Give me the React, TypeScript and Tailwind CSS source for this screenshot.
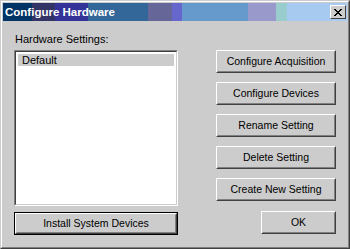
import type { ReactNode } from 'react';

const sideButtons = [
  'Configure Acquisition',
  'Configure Devices',
  'Rename Setting',
  'Delete Setting',
  'Create New Setting',
];

function Button({ children, isDefault, className = '' }: { children: ReactNode; isDefault?: boolean; className?: string }) {
  const face = (
    <div className="h-full border border-t-white border-l-white border-r-[#404040] border-b-[#404040]">
      <div className="h-full flex items-center justify-center border border-t-[#cccccc] border-l-[#cccccc] border-r-[#808080] border-b-[#808080] text-[10.5px]">
        {children}
      </div>
    </div>
  );
  if (isDefault) {
    return <div className={`h-[23px] border border-black ${className}`}>{face}</div>;
  }
  return <div className={`h-[23px] ${className}`}>{face}</div>;
}

export default function App() {
  return (
    <div
      className="w-[350px] h-[249px] bg-[#cccccc] text-black text-[11px] leading-[13px] border border-t-[#cccccc] border-l-[#cccccc] border-r-[#404040] border-b-[#404040]"
      style={{ fontFamily: '"Liberation Sans", Arial, sans-serif' }}
    >
      <div className="h-full border border-t-white border-l-white border-r-[#808080] border-b-[#808080] p-px flex flex-col">
        <div className="h-[18px] flex items-center justify-between pl-[2px] pr-px bg-[linear-gradient(to_right,#003366_0px,#003366_29px,#333366_29px,#333366_52px,#333399_52px,#333399_85px,#336699_85px,#336699_145px,#666699_145px,#666699_169px,#6666cc_169px,#6666cc_179px,#6699cc_179px,#6699cc_245px,#9999cc_245px,#9999cc_273px,#99cccc_273px,#99cccc_284px,#a6caf0_284px)]">
          <span className="text-white font-bold text-[11.5px] leading-[14px]">Configure Hardware</span>
          <div className="w-[16px] h-[14px] bg-[#cccccc] border border-t-white border-l-white border-r-[#404040] border-b-[#404040] flex items-center justify-center">
            <svg width="8" height="7" viewBox="0 0 8 7" shapeRendering="crispEdges">
              <path d="M0 0h2v1h-2zM6 0h2v1h-2zM1 1h2v1h-2zM5 1h2v1h-2zM2 2h4v1h-4zM3 3h2v1h-2zM2 4h4v1h-4zM1 5h2v1h-2zM5 5h2v1h-2zM0 6h2v1h-2zM6 6h2v1h-2z" fill="#000" />
            </svg>
          </div>
        </div>

        <div className="flex-1 flex pl-[11px] pt-[12px]">
          <div className="w-[164px] flex flex-col">
            <div className="pl-px h-[17px]">Hardware Settings:</div>
            <div className="h-[156px] border border-t-[#808080] border-l-[#808080] border-r-white border-b-white">
              <div className="h-full bg-white border border-t-[#404040] border-l-[#404040] border-r-[#cccccc] border-b-[#cccccc] pt-[2px] px-[2px]">
                <div className="h-[12px] bg-[#cccccc] pl-[4px] leading-[12px]">Default</div>
              </div>
            </div>
            <Button isDefault className="mt-[6px]">Install System Devices</Button>
          </div>

          <div className="ml-[38px] w-[120px] flex flex-col pt-[17px]">
            {sideButtons.map((label, i) => (
              <Button key={label} className={i === 0 ? '' : 'mt-[9px]'}>
                {label}
              </Button>
            ))}
            <div className="mt-[10px] flex justify-end">
              <Button className="w-[75px]">OK</Button>
            </div>
          </div>
        </div>
      </div>
    </div>
  );
}
